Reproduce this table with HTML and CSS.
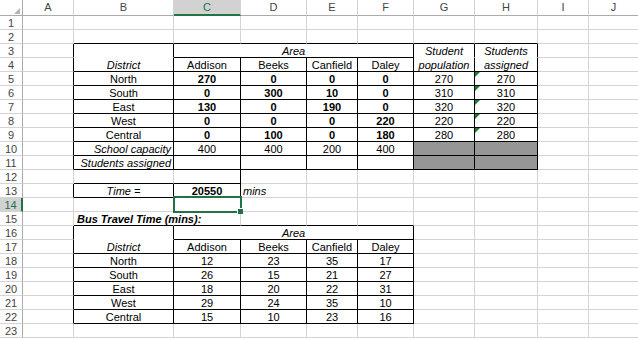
FILE: index.html
```html
<!DOCTYPE html>
<html>
<head>
<meta charset="utf-8">
<link rel="stylesheet" href="styles.css">
</head>
<body>
<div class="sheet">
  <!-- column headers -->
  <div class="corner"><svg width="6" height="6" viewBox="0 0 6 6"><polygon points="6,0 6,6 0,6" fill="#b6b6b6"/></svg></div>
  <div class="ch">A</div><div class="ch">B</div><div class="ch sel">C</div><div class="ch">D</div><div class="ch">E</div><div class="ch">F</div><div class="ch">G</div><div class="ch">H</div><div class="ch">I</div><div class="ch">J</div>

  <!-- row 1 -->
  <div class="rh">1</div>
  <div class="c"></div><div class="c"></div><div class="c"></div><div class="c"></div><div class="c"></div><div class="c"></div><div class="c"></div><div class="c"></div><div class="c"></div><div class="c"></div>

  <!-- row 2 -->
  <div class="rh">2</div>
  <div class="c"></div><div class="c B"></div><div class="c B"></div><div class="c B"></div><div class="c B"></div><div class="c B"></div><div class="c B"></div><div class="c B"></div><div class="c"></div><div class="c"></div>

  <!-- row 3 -->
  <div class="rh">3</div>
  <div class="c R"></div>
  <div class="c R nb"></div>
  <div class="c R B s4 ctr it">Area</div>
  <div class="c R nb ctr it">Student</div>
  <div class="c R nb ctr it">Students</div>
  <div class="c"></div><div class="c"></div>

  <!-- row 4 -->
  <div class="rh">4</div>
  <div class="c R"></div>
  <div class="c R B ctr it">District</div>
  <div class="c R B ctr">Addison</div>
  <div class="c R B ctr">Beeks</div>
  <div class="c R B ctr">Canfield</div>
  <div class="c R B ctr">Daley</div>
  <div class="c R B ctr it">population</div>
  <div class="c R B ctr it">assigned</div>
  <div class="c"></div><div class="c"></div>

  <!-- row 5 -->
  <div class="rh">5</div>
  <div class="c R"></div>
  <div class="c R B ctr">North</div>
  <div class="c R B ctr bd">270</div>
  <div class="c R B ctr bd">0</div>
  <div class="c R B ctr bd">0</div>
  <div class="c R B ctr bd">0</div>
  <div class="c R B ctr">270</div>
  <div class="c R B ctr err">270</div>
  <div class="c"></div><div class="c"></div>

  <!-- row 6 -->
  <div class="rh">6</div>
  <div class="c R"></div>
  <div class="c R B ctr">South</div>
  <div class="c R B ctr bd">0</div>
  <div class="c R B ctr bd">300</div>
  <div class="c R B ctr bd">10</div>
  <div class="c R B ctr bd">0</div>
  <div class="c R B ctr">310</div>
  <div class="c R B ctr err">310</div>
  <div class="c"></div><div class="c"></div>

  <!-- row 7 -->
  <div class="rh">7</div>
  <div class="c R"></div>
  <div class="c R B ctr">East</div>
  <div class="c R B ctr bd">130</div>
  <div class="c R B ctr bd">0</div>
  <div class="c R B ctr bd">190</div>
  <div class="c R B ctr bd">0</div>
  <div class="c R B ctr">320</div>
  <div class="c R B ctr err">320</div>
  <div class="c"></div><div class="c"></div>

  <!-- row 8 -->
  <div class="rh">8</div>
  <div class="c R"></div>
  <div class="c R B ctr">West</div>
  <div class="c R B ctr bd">0</div>
  <div class="c R B ctr bd">0</div>
  <div class="c R B ctr bd">0</div>
  <div class="c R B ctr bd">220</div>
  <div class="c R B ctr">220</div>
  <div class="c R B ctr err">220</div>
  <div class="c"></div><div class="c"></div>

  <!-- row 9 -->
  <div class="rh">9</div>
  <div class="c R"></div>
  <div class="c R B ctr">Central</div>
  <div class="c R B ctr bd">0</div>
  <div class="c R B ctr bd">100</div>
  <div class="c R B ctr bd">0</div>
  <div class="c R B ctr bd">180</div>
  <div class="c R B ctr">280</div>
  <div class="c R B ctr err">280</div>
  <div class="c"></div><div class="c"></div>

  <!-- row 10 -->
  <div class="rh">10</div>
  <div class="c R"></div>
  <div class="c R B rt it">School capacity</div>
  <div class="c R B ctr">400</div>
  <div class="c R B ctr">400</div>
  <div class="c R B ctr">200</div>
  <div class="c R B ctr">400</div>
  <div class="c R B gy"></div>
  <div class="c R B gy"></div>
  <div class="c"></div><div class="c"></div>

  <!-- row 11 -->
  <div class="rh">11</div>
  <div class="c R"></div>
  <div class="c R B rt it">Students assigned</div>
  <div class="c R B"></div>
  <div class="c R B"></div>
  <div class="c R B"></div>
  <div class="c R B"></div>
  <div class="c R B gy"></div>
  <div class="c R B gy"></div>
  <div class="c"></div><div class="c"></div>

  <!-- row 12 -->
  <div class="rh">12</div>
  <div class="c"></div>
  <div class="c B"></div>
  <div class="c B R"></div>
  <div class="c"></div><div class="c"></div><div class="c"></div><div class="c"></div><div class="c"></div><div class="c"></div><div class="c"></div>

  <!-- row 13 -->
  <div class="rh">13</div>
  <div class="c R"></div>
  <div class="c R B ctr it">Time =</div>
  <div class="c R B ctr bd">20550</div>
  <div class="c it">mins</div>
  <div class="c"></div><div class="c"></div><div class="c"></div><div class="c"></div><div class="c"></div><div class="c"></div>

  <!-- row 14 -->
  <div class="rh sel">14</div>
  <div class="c"></div>
  <div class="c"></div>
  <div class="c active"><div class="selbox"><div class="handle"></div></div></div>
  <div class="c"></div><div class="c"></div><div class="c"></div><div class="c"></div><div class="c"></div><div class="c"></div><div class="c"></div>

  <!-- row 15 -->
  <div class="rh">15</div>
  <div class="c"></div>
  <div class="c B nr bd it title">Bus Travel Time (mins):</div>
  <div class="c B"></div>
  <div class="c B"></div>
  <div class="c B"></div>
  <div class="c B"></div>
  <div class="c"></div><div class="c"></div><div class="c"></div><div class="c"></div>

  <!-- row 16 -->
  <div class="rh">16</div>
  <div class="c R"></div>
  <div class="c R nb"></div>
  <div class="c R B s4 ctr it">Area</div>
  <div class="c"></div><div class="c"></div><div class="c"></div><div class="c"></div>

  <!-- row 17 -->
  <div class="rh">17</div>
  <div class="c R"></div>
  <div class="c R B ctr it">District</div>
  <div class="c R B ctr">Addison</div>
  <div class="c R B ctr">Beeks</div>
  <div class="c R B ctr">Canfield</div>
  <div class="c R B ctr">Daley</div>
  <div class="c"></div><div class="c"></div><div class="c"></div><div class="c"></div>

  <!-- row 18 -->
  <div class="rh">18</div>
  <div class="c R"></div>
  <div class="c R B ctr">North</div>
  <div class="c R B ctr">12</div>
  <div class="c R B ctr">23</div>
  <div class="c R B ctr">35</div>
  <div class="c R B ctr">17</div>
  <div class="c"></div><div class="c"></div><div class="c"></div><div class="c"></div>

  <!-- row 19 -->
  <div class="rh">19</div>
  <div class="c R"></div>
  <div class="c R B ctr">South</div>
  <div class="c R B ctr">26</div>
  <div class="c R B ctr">15</div>
  <div class="c R B ctr">21</div>
  <div class="c R B ctr">27</div>
  <div class="c"></div><div class="c"></div><div class="c"></div><div class="c"></div>

  <!-- row 20 -->
  <div class="rh">20</div>
  <div class="c R"></div>
  <div class="c R B ctr">East</div>
  <div class="c R B ctr">18</div>
  <div class="c R B ctr">20</div>
  <div class="c R B ctr">22</div>
  <div class="c R B ctr">31</div>
  <div class="c"></div><div class="c"></div><div class="c"></div><div class="c"></div>

  <!-- row 21 -->
  <div class="rh">21</div>
  <div class="c R"></div>
  <div class="c R B ctr">West</div>
  <div class="c R B ctr">29</div>
  <div class="c R B ctr">24</div>
  <div class="c R B ctr">35</div>
  <div class="c R B ctr">10</div>
  <div class="c"></div><div class="c"></div><div class="c"></div><div class="c"></div>

  <!-- row 22 -->
  <div class="rh">22</div>
  <div class="c R"></div>
  <div class="c R B ctr">Central</div>
  <div class="c R B ctr">15</div>
  <div class="c R B ctr">10</div>
  <div class="c R B ctr">23</div>
  <div class="c R B ctr">16</div>
  <div class="c"></div><div class="c"></div><div class="c"></div><div class="c"></div>

  <!-- row 23 -->
  <div class="rh">23</div>
  <div class="c"></div><div class="c"></div><div class="c"></div><div class="c"></div><div class="c"></div><div class="c"></div><div class="c"></div><div class="c"></div><div class="c"></div><div class="c"></div>
</div>
</body>
</html>
```

FILE: styles.css
```css
html, body {
  margin: 0;
  padding: 0;
  background: #ffffff;
}

body {
  width: 638px;
  height: 338px;
  overflow: hidden;
  font-family: "Liberation Sans", Arial, sans-serif;
  font-size: 11px;
  color: #000000;
}

.sheet {
  display: grid;
  grid-template-columns: 23px 51px 100px 67px 66px 51px 56px 61px 63px 51px 50px;
  grid-template-rows: 16px repeat(23, 14px);
}

.sheet > div {
  box-sizing: border-box;
  min-width: 0;
}

/* headers */
.corner {
  border-right: 1px solid #ababab;
  border-bottom: 1px solid #ababab;
  display: flex;
  justify-content: flex-end;
  align-items: flex-end;
  padding: 0 2px 1px 0;
}

.corner svg {
  display: block;
}

.ch {
  border-right: 1px solid #d4d4d4;
  border-bottom: 1px solid #ababab;
  text-align: center;
  color: #444444;
  line-height: 15px;
}

.ch.sel {
  background: #d2d2d2;
  color: #217346;
  border-bottom: 2px solid #217346;
  line-height: 14px;
}

.rh {
  border-right: 1px solid #ababab;
  border-bottom: 1px solid #d4d4d4;
  text-align: center;
  color: #444444;
  line-height: 13px;
  padding-top: 1px;
}

.rh.sel {
  background: #d2d2d2;
  color: #217346;
  border-right: 2px solid #217346;
}

/* cells */
.c {
  border-right: 1px solid #d4d4d4;
  border-bottom: 1px solid #d4d4d4;
  padding: 1px 2px 0;
  line-height: 13px;
  white-space: nowrap;
}

.ctr { text-align: center; }
.rt { text-align: right; }
.it { font-style: italic; }
.bd { font-weight: bold; }

.R { border-right-color: #000000; }
.B { border-bottom-color: #000000; }
.nb { border-bottom-color: transparent; }
.nr { border-right-color: transparent; }

.s4 { grid-column: span 4; }

.gy { background: #969696; }

.title {
  padding-left: 3px;
}

/* error indicator triangle */
.err {
  position: relative;
}

.err::before {
  content: "";
  position: absolute;
  left: 0;
  top: 0;
  border-top: 5px solid #1e7b34;
  border-right: 5px solid transparent;
}

/* active cell selection */
.active {
  position: relative;
}

.selbox {
  position: absolute;
  left: -1px;
  top: -2px;
  width: 69px;
  height: 17px;
  box-sizing: border-box;
  border: 2px solid #217346;
}

.handle {
  position: absolute;
  right: -3px;
  bottom: -3px;
  width: 5px;
  height: 5px;
  background: #217346;
  border-left: 1px solid #ffffff;
  border-top: 1px solid #ffffff;
}
```
